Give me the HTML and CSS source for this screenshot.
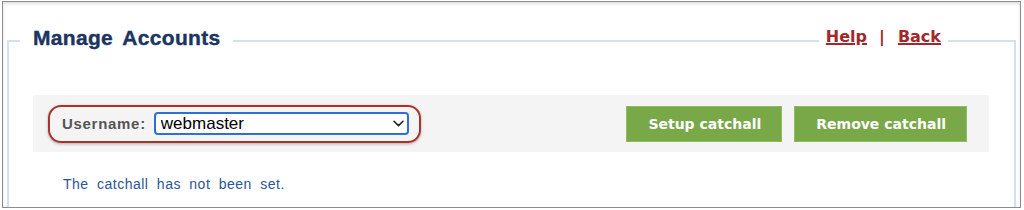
FILE: index.html
```html
<!DOCTYPE html>
<html lang="en">
<head>
    <meta charset="UTF-8">
    <meta name="viewport" content="width=device-width, initial-scale=1.0">
    <title>Manage Accounts</title>
    <link rel="stylesheet" href="styles.css">
</head>
<body>
    <div class="frame">
        <fieldset class="panel">
            <legend class="panel-title">Manage Accounts</legend>

            <div class="toolbar">
                <div class="user-pick">
                    <label for="username" class="user-label">Username:</label>
                    <div class="select-wrap">
                        <select id="username" class="user-select">
                            <option>webmaster</option>
                        </select>
                        <svg class="chevron" width="11" height="7" viewBox="0 0 11 7">
                            <path d="M1 1.2 L5.5 5.6 L10 1.2" fill="none" stroke="#1e1e1e" stroke-width="1.5" stroke-linecap="round" stroke-linejoin="round"/>
                        </svg>
                    </div>
                </div>
                <div class="actions">
                    <button class="btn">Setup catchall</button>
                    <button class="btn">Remove catchall</button>
                </div>
            </div>

            <p class="status">The catchall has not been set.</p>
        </fieldset>

        <div class="top-links">
            <a href="#">Help</a><span class="sep">|</span><a href="#">Back</a>
        </div>
    </div>
</body>
</html>
```

FILE: styles.css
```css
body {
    margin: 0;
    background: #fff;
    font-family: "Liberation Sans", Arial, sans-serif;
}
.frame {
    position: relative;
    box-sizing: border-box;
    height: 207px;
    margin: 1px 3px 2px 2px;
    border: 1px solid #8c8c8c;
    background: #fff;
    box-shadow: inset 0 2px 3px rgba(0,0,0,0.12);
    overflow: hidden;
}
.panel {
    margin: 24px 4px 0 4px;
    padding: 0 0 40px;
    border: 2px solid #d3e0f3;
}
.panel-title {
    margin-left: 11px;
    padding: 0 13px 5px;
    line-height: 24px;
    font-size: 21px;
    font-weight: bold;
    letter-spacing: 0.3px;
    word-spacing: 4px;
    color: #1b355f;
    -webkit-text-stroke: 0.4px #1b355f;
}
.top-links {
    position: absolute;
    top: 24px;
    right: 72px;
    padding: 0 7px;
    background: #fff;
    font-family: "DejaVu Sans", Verdana, sans-serif;
    font-size: 16px;
    font-weight: bold;
    line-height: 21px;
    color: #a3282a;
}
.top-links a {
    color: #a3282a;
    text-decoration: underline;
    text-decoration-thickness: 2px;
}
.sep {
    margin: 0 13px 0 12px;
}
.toolbar {
    display: flex;
    align-items: center;
    justify-content: space-between;
    height: 57px;
    margin: 40px 25px 0 24px;
    padding: 0 22px 0 15px;
    background: #f4f4f4;
}
.user-pick {
    display: flex;
    align-items: center;
    gap: 8px;
    box-sizing: border-box;
    height: 38px;
    padding: 0 10px 0 12px;
    border: 2px solid #a6342c;
    border-radius: 13px;
    box-shadow: 0 1px 3px rgba(0,0,0,0.3);
}
.user-label {
    font-size: 15px;
    font-weight: bold;
    letter-spacing: 0.7px;
    color: #555;
}
.select-wrap {
    position: relative;
    display: flex;
}
.user-select {
    appearance: none;
    box-sizing: border-box;
    width: 255px;
    height: 23px;
    padding: 0 20px 0 5px;
    border: 2px solid #2f6fd9;
    border-radius: 4px;
    background: #fff;
    font-family: "Liberation Sans", Arial, sans-serif;
    font-size: 17px;
    color: #000;
    outline: none;
}
.chevron {
    position: absolute;
    right: 5px;
    top: 8px;
    pointer-events: none;
}
.actions {
    display: flex;
    gap: 12px;
}
.btn {
    height: 36px;
    padding: 0 20px 0 21px;
    border: 1px solid #8fbd62;
    background: #78a847;
    color: #fff;
    font-family: "DejaVu Sans", Verdana, sans-serif;
    font-size: 14px;
    font-weight: bold;
    cursor: pointer;
}
.status {
    margin: 24px 0 0 54px;
    font-size: 14px;
    line-height: 17px;
    letter-spacing: 0.5px;
    word-spacing: 4px;
    color: #2b5594;
}
```
